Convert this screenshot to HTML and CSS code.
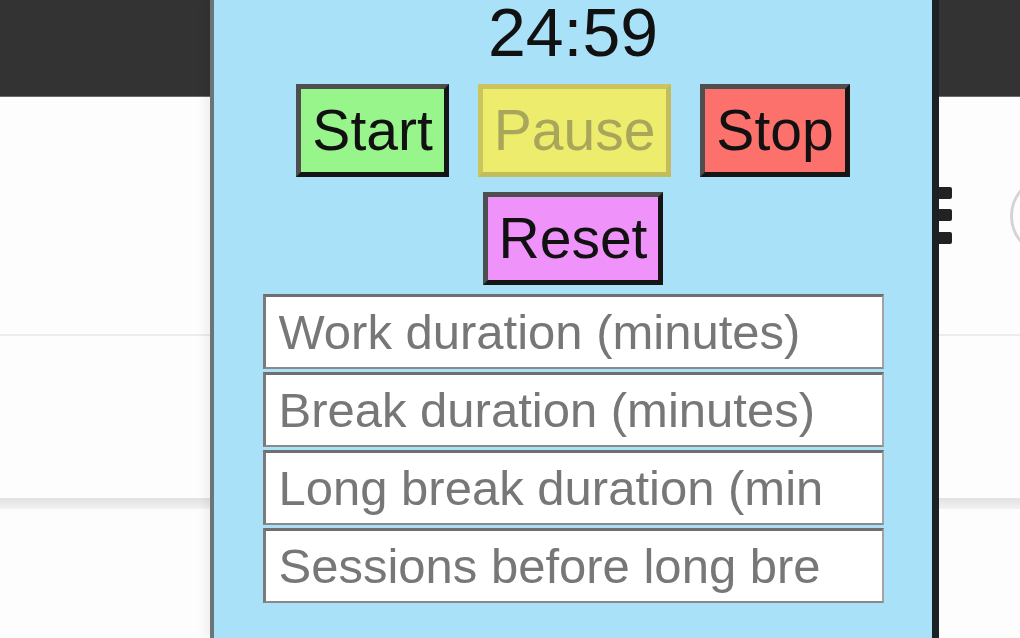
FILE: index.html
```html
<!DOCTYPE html>
<html lang="en">
<head>
<meta charset="utf-8">
<title>Pomodoro</title>
<link rel="stylesheet" href="styles.css">
</head>
<body>
<div class="page">
  <header class="topbar"></header>
  <section class="toolbar">
    <svg class="menu-icon" width="24" height="57" viewBox="0 0 24 57" aria-hidden="true">
      <rect x="0" y="0" width="24" height="12" rx="2" fill="#222"/>
      <rect x="0" y="22" width="24" height="12" rx="2" fill="#222"/>
      <rect x="0" y="45" width="24" height="12" rx="2" fill="#222"/>
    </svg>
    <div class="avatar"></div>
  </section>
  <div class="rule"></div>
  <section class="list"></section>
  <div class="band"></div>
</div>

<div class="popup">
  <div class="timer">24:59</div>
  <div class="controls">
    <button class="btn start">Start</button>
    <button class="btn pause" disabled>Pause</button>
    <button class="btn stop">Stop</button>
  </div>
  <div class="controls second">
    <button class="btn reset">Reset</button>
  </div>
  <div class="settings">
    <input class="field" type="number" placeholder="Work duration (minutes)">
    <input class="field" type="number" placeholder="Break duration (minutes)">
    <input class="field" type="number" placeholder="Long break duration (minutes)">
    <input class="field" type="number" placeholder="Sessions before long break">
  </div>
</div>
</body>
</html>
```

FILE: styles.css
```css
html, body {
  margin: 0;
  padding: 0;
  width: 1020px;
  height: 638px;
  overflow: hidden;
}

body {
  position: relative;
  background: #fdfdfd;
  font-family: "Liberation Sans", Arial, sans-serif;
}

.page {
  display: flex;
  flex-direction: column;
}

.topbar {
  height: 96px;
  background: #333333;
  border-bottom: 1px solid #6a6a6a;
}

.toolbar {
  height: 237px;
  display: flex;
  justify-content: flex-end;
  align-items: center;
  gap: 58px;
}

.menu-icon {
  display: block;
}

.avatar {
  width: 80px;
  height: 80px;
  box-sizing: border-box;
  border: 3px solid #d4d4d4;
  border-radius: 50%;
  margin-right: -70px;
}

.rule {
  height: 2px;
  background: #ececec;
}

.list {
  height: 162px;
}

.band {
  height: 11px;
  background: linear-gradient(#e2e2e2, #f2f2f2);
}

.popup {
  position: absolute;
  top: 0;
  left: 210px;
  width: 729px;
  height: 638px;
  box-sizing: border-box;
  background: #a9e1f9;
  border-left: 4px solid #6b7478;
  border-right: 7px solid #1b2225;
  box-shadow: -6px 0 8px rgba(0, 0, 0, 0.05);
  display: flex;
  flex-direction: column;
  align-items: center;
}

.timer {
  font-size: 68px;
  line-height: 64px;
  color: #111;
  text-align: center;
}

.controls {
  display: flex;
  justify-content: center;
  gap: 29px;
  margin-top: 20px;
}

.controls.second {
  margin-top: 15px;
}

.btn {
  font-family: "Liberation Sans", Arial, sans-serif;
  font-size: 57px;
  line-height: 65px;
  padding: 9px 11px;
  border-width: 5px;
  border-style: solid;
  border-color: #4e4e4e #151515 #151515 #4e4e4e;
  color: #111;
  margin: 0;
  border-radius: 0;
}

.start { background: #98f58b; }
.stop  { background: #fd716d; }
.reset { background: #ef92f9; }

.pause {
  background: #eeec6c;
  color: #a8a65a;
  border-color: #cbc55f #c2bd5a #c2bd5a #cbc55f;
}

.settings {
  display: flex;
  flex-direction: column;
  align-items: center;
  gap: 3px;
  margin-top: 9px;
}

.field {
  width: 621px;
  height: 75px;
  box-sizing: border-box;
  margin: 0;
  padding: 0 62px 0 13px;
  background: #fff;
  font-family: "Liberation Sans", Arial, sans-serif;
  font-size: 49px;
  color: #222;
  border-style: solid;
  border-width: 3px 2px 2px 3px;
  border-color: #6f6f6f #a3a3a3 #8a8a8a #7a7a7a;
  border-radius: 0;
  outline: none;
  -moz-appearance: textfield;
}

.field::-webkit-outer-spin-button,
.field::-webkit-inner-spin-button {
  -webkit-appearance: none;
  margin: 0;
}

.field::placeholder {
  color: #777777;
  opacity: 1;
}
```
